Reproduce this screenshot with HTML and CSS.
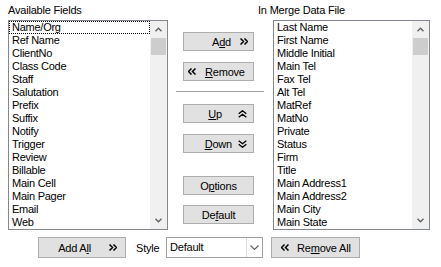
FILE: index.html
```html
<!DOCTYPE html>
<html>
<head>
<meta charset="utf-8">
<link rel="stylesheet" href="styles.css">
</head>
<body>
<div class="dialog">
  <div class="main">
    <div class="col col-left">
      <div class="label">Available Fields</div>
      <div class="listbox lb-left">
        <div class="items">
          <div class="item focus">Name/Org</div>
          <div class="item">Ref Name</div>
          <div class="item">ClientNo</div>
          <div class="item">Class Code</div>
          <div class="item">Staff</div>
          <div class="item">Salutation</div>
          <div class="item">Prefix</div>
          <div class="item">Suffix</div>
          <div class="item">Notify</div>
          <div class="item">Trigger</div>
          <div class="item">Review</div>
          <div class="item">Billable</div>
          <div class="item">Main Cell</div>
          <div class="item">Main Pager</div>
          <div class="item">Email</div>
          <div class="item">Web</div>
        </div>
        <div class="vscroll">
          <div class="sb-btn"><svg width="7" height="5" viewBox="0 0 7 5"><path d="M0.5 4.2 L3.5 1.2 L6.5 4.2" fill="none" stroke="#606060" stroke-width="1.4"/></svg></div>
          <div class="sb-thumb"></div>
          <div class="sb-track"></div>
          <div class="sb-btn"><svg width="7" height="5" viewBox="0 0 7 5"><path d="M0.5 0.8 L3.5 3.8 L6.5 0.8" fill="none" stroke="#606060" stroke-width="1.4"/></svg></div>
        </div>
      </div>
    </div>

    <div class="col col-mid">
      <button class="btn btn-add"><span class="txt">A<u>d</u>d</span><svg class="ico-r" width="8" height="7" viewBox="0 0 8 7"><path d="M0.5 0.5 L3.5 3.5 L0.5 6.5 M4.5 0.5 L7.5 3.5 L4.5 6.5" fill="none" stroke="#000" stroke-width="1.5"/></svg></button>
      <button class="btn btn-remove"><svg class="ico-l" width="8" height="7" viewBox="0 0 8 7"><path d="M3.5 0.5 L0.5 3.5 L3.5 6.5 M7.5 0.5 L4.5 3.5 L7.5 6.5" fill="none" stroke="#000" stroke-width="1.5"/></svg><span class="txt"><u>R</u>emove</span></button>
      <div class="sep"></div>
      <button class="btn btn-up"><span class="txt"><u>U</u>p</span><svg class="ico-r" width="9" height="8" viewBox="0 0 9 8"><path d="M0.7 3.8 L4.5 0.8 L8.3 3.8 M0.7 7.3 L4.5 4.3 L8.3 7.3" fill="none" stroke="#000" stroke-width="1.4"/></svg></button>
      <button class="btn btn-down"><span class="txt"><u>D</u>own</span><svg class="ico-r" width="9" height="8" viewBox="0 0 9 8"><path d="M0.7 0.7 L4.5 3.7 L8.3 0.7 M0.7 4.2 L4.5 7.2 L8.3 4.2" fill="none" stroke="#000" stroke-width="1.4"/></svg></button>
      <button class="btn btn-options"><span class="txt">O<u>p</u>tions</span></button>
      <button class="btn btn-default"><span class="txt">De<u>f</u>ault</span></button>
    </div>

    <div class="col col-right">
      <div class="label">In Merge Data File</div>
      <div class="listbox lb-right">
        <div class="items">
          <div class="item">Last Name</div>
          <div class="item">First Name</div>
          <div class="item">Middle Initial</div>
          <div class="item">Main Tel</div>
          <div class="item">Fax Tel</div>
          <div class="item">Alt Tel</div>
          <div class="item">MatRef</div>
          <div class="item">MatNo</div>
          <div class="item">Private</div>
          <div class="item">Status</div>
          <div class="item">Firm</div>
          <div class="item">Title</div>
          <div class="item">Main Address1</div>
          <div class="item">Main Address2</div>
          <div class="item">Main City</div>
          <div class="item">Main State</div>
        </div>
        <div class="vscroll">
          <div class="sb-btn"><svg width="7" height="5" viewBox="0 0 7 5"><path d="M0.5 4.2 L3.5 1.2 L6.5 4.2" fill="none" stroke="#606060" stroke-width="1.4"/></svg></div>
          <div class="sb-thumb"></div>
          <div class="sb-track"></div>
          <div class="sb-btn"><svg width="7" height="5" viewBox="0 0 7 5"><path d="M0.5 0.8 L3.5 3.8 L6.5 0.8" fill="none" stroke="#606060" stroke-width="1.4"/></svg></div>
        </div>
      </div>
    </div>
  </div>

  <div class="bottom">
    <button class="btn btn-addall"><span class="txt">Add A<u>l</u>l</span><svg class="ico-r" width="8" height="7" viewBox="0 0 8 7"><path d="M0.5 0.5 L3.5 3.5 L0.5 6.5 M4.5 0.5 L7.5 3.5 L4.5 6.5" fill="none" stroke="#000" stroke-width="1.5"/></svg></button>
    <span class="style-label">Style</span>
    <div class="combo">
      <span class="combo-text">Default</span>
      <span class="combo-arrow"><svg width="9" height="5" viewBox="0 0 9 5"><path d="M0.5 0.5 L4.5 4.5 L8.5 0.5" fill="none" stroke="#606060" stroke-width="1.1"/></svg></span>
    </div>
    <button class="btn btn-removeall"><svg class="ico-l" width="8" height="7" viewBox="0 0 8 7"><path d="M3.5 0.5 L0.5 3.5 L3.5 6.5 M7.5 0.5 L4.5 3.5 L7.5 6.5" fill="none" stroke="#000" stroke-width="1.5"/></svg><span class="txt">Re<u>m</u>ove All</span></button>
  </div>
</div>
</body>
</html>
```

FILE: styles.css
```css
html, body {
  margin: 0;
  padding: 0;
  background: #ffffff;
}
body {
  font-family: "Liberation Sans", Arial, sans-serif;
  font-size: 11px;
  color: #000;
  letter-spacing: -0.2px;
}
.dialog {
  padding: 4px 0 0 8px;
}
.main {
  display: flex;
  align-items: flex-start;
}
.col-left {
  width: 160px;
}
.label {
  height: 16px;
  line-height: 13px;
  white-space: nowrap;
}
.listbox {
  display: flex;
  height: 208px;
  border: 1px solid #828790;
  background: #fff;
}
.lb-left {
  width: 158px;
}
.lb-right {
  width: 155px;
  margin-left: 15px;
}
.items {
  flex: 1;
  display: flex;
  flex-direction: column;
  overflow: hidden;
}
.item {
  height: 13px;
  line-height: 13px;
  padding-left: 3px;
  white-space: nowrap;
  box-sizing: border-box;
  letter-spacing: -0.25px;
}
.item.focus {
  outline: 1px dotted #000;
  outline-offset: -1px;
}
.vscroll {
  width: 17px;
  display: flex;
  flex-direction: column;
  background: #f0f0f0;
}
.sb-btn {
  height: 17px;
  display: flex;
  align-items: center;
  justify-content: center;
}
.sb-thumb {
  height: 17px;
  margin: 0 1px;
  background: #cdcdcd;
}
.sb-track {
  flex: 1;
}

.col-mid {
  width: 90px;
  padding-top: 28px;
  display: flex;
  flex-direction: column;
  align-items: flex-start;
}
.btn {
  font: inherit;
  letter-spacing: inherit;
  color: #000;
  background: #e1e1e1;
  border: 1px solid #adadad;
  border-radius: 0;
  padding: 0;
  margin: 0;
  height: 19px;
  display: flex;
  align-items: center;
  box-sizing: border-box;
}
.col-mid .btn {
  width: 71px;
  margin-left: 15px;
}
.btn u {
  text-decoration-thickness: 1px;
  text-underline-offset: 1px;
}
.btn-add {
  justify-content: flex-end;
  padding-right: 5px;
  gap: 9px;
}
.btn-remove {
  margin-top: 11px;
  padding-left: 4px;
  gap: 9px;
}
.sep {
  width: 88px;
  height: 1px;
  background: #a0a0a0;
  margin: 10px 0 12px 8px;
}
.btn-up, .btn-down {
  justify-content: flex-end;
  padding-right: 6px;
}
.btn-up .txt { margin-right: 16px; }
.btn-down .txt { margin-right: 6px; }
.btn-down {
  margin-top: 11px;
}
.btn-options {
  justify-content: center;
  margin-top: 23px;
}
.btn-default {
  justify-content: center;
  margin-top: 10px;
}

.bottom {
  display: flex;
  align-items: center;
  margin-top: 7px;
  padding-left: 30px;
}
.btn-addall {
  width: 88px;
  height: 21px;
  justify-content: flex-end;
  padding-right: 8px;
  gap: 18px;
}
.style-label {
  margin-left: 10px;
  width: 30px;
}
.combo {
  width: 97px;
  height: 21px;
  box-sizing: border-box;
  border: 1px solid #a0a0a0;
  background: #fff;
  display: flex;
  align-items: stretch;
}
.combo-text {
  flex: 1;
  padding-left: 3px;
  line-height: 19px;
}
.combo-arrow {
  width: 15px;
  display: flex;
  align-items: center;
  justify-content: center;
  border-left: 1px solid #dadada;
}
.btn-removeall {
  width: 89px;
  height: 21px;
  margin-left: 8px;
  padding-left: 9px;
  gap: 8px;
}
```
